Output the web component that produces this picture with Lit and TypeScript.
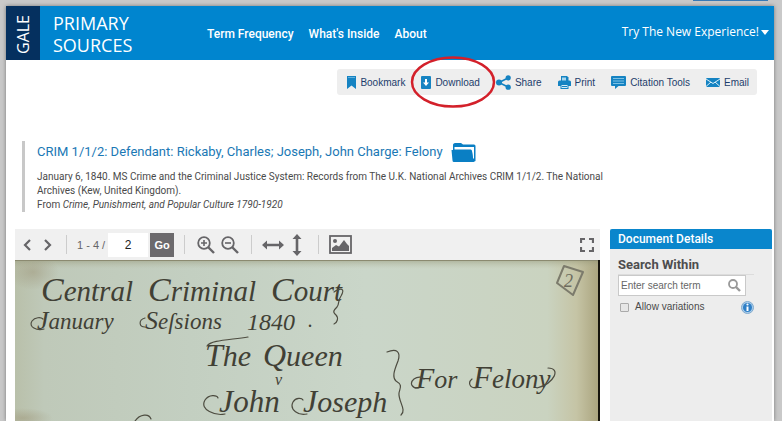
import { LitElement, html, css, svg } from "lit";
import { customElement, state } from "lit/decorators.js";

const icons = {
  bookmark: html`<svg width="9" height="13" viewBox="0 0 9 13" fill="currentColor" aria-hidden="true"><path d="M0 0h9v13L4.500 9.500 0 13z"/><path d="M1 1.500h7" stroke="#5fb0de" stroke-width="1"/></svg>`,
  download: html`<svg width="10" height="13" viewBox="0 0 10 13" aria-hidden="true"><rect width="10" height="13" rx="1" fill="currentColor"/><path d="M5 3v5" stroke="#fff" stroke-width="2"/><path d="M2 6.500h6L5 10z" fill="#fff"/></svg>`,
  share: html`<svg width="15" height="15" viewBox="0 0 15 15" fill="currentColor" aria-hidden="true"><path d="M12 3 3 7.500 12 12" fill="none" stroke="currentColor" stroke-width="1.600"/><circle cx="3" cy="7.500" r="3"/><circle cx="12.200" cy="2.800" r="2.600"/><circle cx="12.200" cy="12.200" r="2.600"/></svg>`,
  print: html`<svg width="13" height="13" viewBox="0 0 13 13" aria-hidden="true"><path d="M3 0h6l1.500 1.500V5H3z" fill="currentColor"/><path d="M4 1.500h4V5H4z" fill="#a8d6ee"/><path d="M1.500 4.500h10A1.500 1.500 0 0 1 13 6v4H0V6a1.500 1.500 0 0 1 1.500-1.500z" fill="currentColor"/><path d="M2.500 8h8v5h-8z" fill="currentColor"/><path d="M3.500 9h6v3h-6z" fill="#d5ebf6"/><path d="M4 10.500h5" stroke="currentColor"/></svg>`,
  cite: html`<svg width="15" height="13" viewBox="0 0 15 13" aria-hidden="true"><path d="M1 0h13a1 1 0 0 1 1 1v8a1 1 0 0 1-1 1H7.500L4 13v-3H1a1 1 0 0 1-1-1V1a1 1 0 0 1 1-1z" fill="currentColor"/><path d="M2 2.500h11M2 5h11M2 7.500h11" stroke="#7cc0e4" stroke-width="1"/></svg>`,
  email: html`<svg width="14" height="9" viewBox="0 0 14 9" aria-hidden="true"><rect width="14" height="9" rx="1" fill="currentColor"/><path d="M0 1l7 4.500L14 1M0 8.500 5 4M14 8.500 9 4" fill="none" stroke="#d9eef8" stroke-width="1"/></svg>`,
  folder: html`<svg width="25" height="21" viewBox="0 0 25 21" aria-hidden="true"><path d="M2 2.500Q2.500 1 4 1h6l2 1.500h11a1.500 1.500 0 0 1 1.500 1.500v15L22.500 20H3L1 9l1-1z" fill="#0a7fc4"/><path d="M3.500 5h19.500v11.500h-1L21 9 20 7.500H3.500z" fill="#fff"/><path d="M.500 8H19.500a1.500 1.500 0 0 1 1.500 1.500L22.500 20H3a1.500 1.500 0 0 1-1.500-1.500z" fill="#0a7fc4"/></svg>`,
  prev: html`<svg width="8" height="12" viewBox="0 0 8 12" fill="none" stroke="currentColor" stroke-width="2.200" aria-hidden="true"><path d="M7 1 2 6l5 5"/></svg>`,
  next: html`<svg width="8" height="12" viewBox="0 0 8 12" fill="none" stroke="currentColor" stroke-width="2.200" aria-hidden="true"><path d="m1 1 5 5-5 5"/></svg>`,
  zoomIn: html`<svg width="18" height="18" viewBox="0 0 18 18" fill="none" stroke="currentColor" aria-hidden="true"><circle cx="7" cy="7" r="5.800" stroke-width="1.800"/><path d="m11 11 6 6" stroke-width="2.400"/><path d="M4 7h6M7 4v6" stroke-width="1.600"/></svg>`,
  zoomOut: html`<svg width="18" height="18" viewBox="0 0 18 18" fill="none" stroke="currentColor" aria-hidden="true"><circle cx="7" cy="7" r="5.800" stroke-width="1.800"/><path d="m11 11 6 6" stroke-width="2.400"/><path d="M4 7h6" stroke-width="1.600"/></svg>`,
  fitWidth: html`<svg width="22" height="10" viewBox="0 0 22 10" fill="currentColor" aria-hidden="true"><path d="M0 5l5-4.500v3.200h12V.500L22 5l-5 4.500V6.300H5v3.200z"/></svg>`,
  fitHeight: html`<svg width="10" height="22" viewBox="0 0 10 22" fill="currentColor" aria-hidden="true"><path d="M5 0l4.500 5H6.300v12h3.200L5 22 .500 17h3.200V5H.500z"/></svg>`,
  picture: html`<svg width="23" height="19" viewBox="0 0 23 19" aria-hidden="true"><rect x="1" y="1" width="21" height="17" fill="none" stroke="currentColor" stroke-width="1.800"/><circle cx="6" cy="6" r="2" fill="currentColor"/><path d="M3 16v-3l4-3 3 1.500L15 5l3 4 2 2v5z" fill="currentColor"/></svg>`,
  full: html`<svg width="14" height="14" viewBox="0 0 14 14" fill="none" stroke="currentColor" stroke-width="2.200" aria-hidden="true"><path d="M1 5V1h4M9 1h4v4M13 9v4H9M5 13H1V9"/></svg>`,
  search: html`<svg width="13" height="13" viewBox="0 0 13 13" fill="none" stroke="currentColor" aria-hidden="true"><circle cx="5" cy="5" r="4" stroke-width="1.800"/><path d="m8 8 4 4" stroke-width="2.400"/></svg>`,
  info: html`<svg width="13" height="13" viewBox="0 0 13 13" aria-hidden="true"><circle cx="6.500" cy="6.500" r="6" fill="#a9cdec" stroke="#7fa9cc"/><circle cx="6.500" cy="6.500" r="4.500" fill="#2f7fc6"/><path d="M6.500 5.500v4.500" stroke="#fff" stroke-width="2"/><circle cx="6.500" cy="3.500" r="1.100" fill="#fff"/></svg>`,
};

// Each word has a capital larger than the letters that follow it.
const words: { cap: string; rest: string; x: number; y: number; capSize: number; size: number }[] = [
  { cap: "C", rest: "entral", x: 26, y: 41, capSize: 34, size: 29 },
  { cap: "C", rest: "riminal", x: 133, y: 41, capSize: 34, size: 29 },
  { cap: "C", rest: "ourt", x: 256, y: 41, capSize: 34, size: 29 },
  { cap: "J", rest: "anuary", x: 22, y: 69, capSize: 26, size: 23 },
  { cap: "S", rest: "eſsions", x: 130, y: 69, capSize: 26, size: 23 },
  { cap: "1", rest: "840", x: 232, y: 70, capSize: 24, size: 24 },
  { cap: ".", rest: "", x: 293, y: 67, capSize: 20, size: 20 },
  { cap: "T", rest: "he", x: 190, y: 106, capSize: 32, size: 30 },
  { cap: "Q", rest: "ueen", x: 248, y: 106, capSize: 32, size: 30 },
  { cap: "v", rest: "", x: 260, y: 125, capSize: 16, size: 16 },
  { cap: "J", rest: "ohn", x: 204, y: 152, capSize: 32, size: 31 },
  { cap: "J", rest: "oseph", x: 288, y: 152, capSize: 32, size: 30 },
  { cap: "F", rest: "or", x: 401, y: 128, capSize: 30, size: 26 },
  { cap: "F", rest: "elony", x: 458, y: 128, capSize: 31, size: 27 },
];

@customElement("manuscript-page")
export class ManuscriptPage extends LitElement {
  static styles = css`
    :host { display: block; }
    .sheet { display: block; width: 100%; height: auto; }
    .word { font-family: "Liberation Serif", serif; font-style: italic; fill: #414035; }
    .ink { fill: none; stroke: #4d4c40; stroke-width: 1.200; stroke-linecap: round; }
    .pencil { fill: none; stroke: #7c7b6c; stroke-width: 2; stroke-linejoin: round; }
    .folio { font-family: "Liberation Serif", serif; font-style: italic; fill: #6d6c5f; }
  `;

  render() {
    return html`<svg class="sheet" viewBox="0 0 585 161" role="img" aria-label="Manuscript page">
      <defs>
        <linearGradient id="paper" x1="0" x2="1" y1="0" y2="0">
          <stop offset="0" stop-color="#b9c0aa"/><stop offset=".05" stop-color="#bfc9b9"/>
          <stop offset=".3" stop-color="#c3cfc1"/><stop offset=".6" stop-color="#cad6c9"/>
          <stop offset=".91" stop-color="#cad3c0"/><stop offset=".96" stop-color="#c5c4a5"/>
          <stop offset="1" stop-color="#a9a27c"/>
        </linearGradient>
        <linearGradient id="top" x1="0" x2="0" y1="0" y2="1">
          <stop offset="0" stop-color="#8f9070" stop-opacity=".5"/><stop offset="1" stop-color="#b5b89d" stop-opacity="0"/>
        </linearGradient>
        <radialGradient id="stain"><stop offset="0" stop-color="#9d9578" stop-opacity=".5"/><stop offset="1" stop-color="#9d9578" stop-opacity="0"/></radialGradient>
      </defs>
      <rect width="585" height="161" fill="url(#paper)"/>
      <rect width="585" height="9" fill="url(#top)"/>
      <ellipse cx="18" cy="12" rx="26" ry="18" fill="url(#stain)"/>
      <ellipse cx="8" cy="158" rx="30" ry="10" fill="url(#stain)"/>
      <path d="M0 .500h585" stroke="#8b8a70"/>
      <rect x="583" width="2" height="161" fill="#16140d"/>
      ${words.map((w) => svg`<text class="word" x=${w.x} y=${w.y} font-size=${w.size}><tspan font-size=${w.capSize}>${w.cap}</tspan>${w.rest}</text>`)}
      <path class="ink" d="M319 32c8-5 11-3 7 4-4 6-1 7-4 11-3 3-5 5-1 8 3 3 1 8-2 9"/>
      <path class="ink" d="M29 69c-7 2-16-2-12-8 3-4 9-4 11-2M130 67c-6 0-7-7 0-9"/>
      <path class="ink" d="M192 86c4-6 22-6 41-9"/>
      <path class="ink" d="M210 154c-9 2-26-4-20-14 4-6 12-5 13-2M292 154c-8 2-18-4-14-12 3-5 9-4 10-2"/>
      <path class="ink" d="M372 92c10-4 14 0 11 9-4 10-6 16-2 20 7 4 4 7 3 12-1 8 8 17 2 22"/>
      <path class="ink" d="M404 128c-7 1-10-5-5-9 4-3 9-2 10 0M461 128c-7 0-8-6-4-9M522 128c18-5 24-20 11-20M120 161c5-7 14-8 16-2"/>
      <path class="pencil" d="m549 6 19 6-10 23-16-12z"/>
      <text class="folio" x="549" y="27" font-size="18">2</text>
    </svg>`;
  }
}

@customElement("app-root")
export class AppRoot extends LitElement {
  @state() private pageNo = "2";

  static styles = css`
    :host { display: block; background: #fff; font-family: "Liberation Sans", Arial, sans-serif; color: #4a4a4a; }
    * { box-sizing: border-box; }
    button { border: 0; padding: 0; background: none; font: inherit; color: inherit; display: flex; align-items: center; cursor: pointer; }
    svg { display: block; flex: none; }
    a { color: inherit; text-decoration: none; }
    h1, h2, h3, p { margin: 0; font-weight: 400; }
    .backdrop { background: #c9c9c9; padding: 0 8px 0 6px; margin-right: 1px; overflow: hidden; }
    .top { height: 6px; padding-right: 6px; display: flex; justify-content: flex-end; }
    .tab { width: 75px; height: 1px; background: #3779b5; }
    .page { background: #fff; box-shadow: 0 0 4px #777; }
    .header { display: flex; align-items: stretch; background: #0085cf; color: #fff; height: 54px; }
    .gale { width: 34px; background: #05305f; display: flex; align-items: center; justify-content: center; padding-top: 2px; font: 16px/20px "Open Sans", sans-serif; }
    .gale span { writing-mode: vertical-rl; transform: rotate(180deg); }
    .brand { width: 167px; padding: 6px 0 0 13px; font: 18px/22px "Open Sans", sans-serif; }
    .nav { display: flex; gap: 15px; align-items: center; padding-top: 2px; font: 500 12px/16px Roboto, sans-serif; flex: 1; }
    .try { font: 12px/16px "Open Sans", sans-serif; gap: 2px; padding: 0 5px 2px 0; }
    .tools { display: flex; justify-content: flex-end; padding: 9px 17px 0 0; }
    .toolbar { display: flex; align-items: center; gap: 16px; height: 26px; padding: 0 8px 0 10px; background: #eee; border-radius: 3px; font-size: 10px; color: #1d3d6b; }
    .toolbar button { position: relative; gap: 4px; }
    .toolbar svg { color: #1583c2; }
    .toolbar .ring { position: absolute; left: 50%; top: 50%; margin: -26px 0 0 -41px; pointer-events: none; color: #d3202a; }
    .doc { margin: 49px 16px 0; padding: 0 0 0 12px; border-left: 3px solid #c8c8c8; min-height: 71px; font: 10px/14px Roboto, sans-serif; }
    .doc .row { display: flex; align-items: flex-start; gap: 8px; padding-bottom: 7px; margin-top: -3px; }
    .doc h1 { font-size: 13px; line-height: 22px; color: #1a78b5; }
    .doc .row button { padding-top: 1px; height: 21px; }
    .body { display: flex; align-items: stretch; gap: 10px; padding: 17px 2px 0 9px; }
    .viewer { flex: 1; min-width: 0; }
    .bar { display: flex; align-items: center; height: 31px; background: #f0f0f0; color: #666568; padding: 0 6px 0 8px; font-size: 11px; }
    .sep { width: 1px; height: 19px; background: #ccc; }
    .pair { display: flex; align-items: center; gap: 13px; }
    .steps { padding-right: 14px; }
    .zoom { gap: 6px; padding: 0 12px; }
    .fit { gap: 8px; padding: 0 16px 0 10px; }
    .pic { padding-left: 10px; flex: 1; }
    .pages { display: flex; align-items: center; gap: 2px; padding: 0 10px; }
    .pages label { padding-right: 1px; }
    .num { width: 40px; height: 24px; border: 0; background: #fff; text-align: center; font: 12px "Liberation Sans", sans-serif; color: #222; padding: 0; }
    .go { width: 24px; height: 24px; justify-content: center; background: #6c6a6d; color: #fff; font: bold 11px "Liberation Sans", sans-serif; }
    .side { width: 162px; background: #ededed; }
    .side h2 { font: 500 12px/20px Roboto, sans-serif; background: #0a86cc; color: #fff; padding-left: 8px; border-radius: 2px 2px 0 0; }
    .panel { padding: 7px 18px 0 8px; }
    .side h3 { font: bold 13px/18px Roboto, sans-serif; color: #4d4d4f; border-bottom: 1px solid #dcdcdc; }
    .find { display: flex; align-items: center; width: 128px; height: 21px; background: #fff; border: 1px solid #c9c9c9; padding-right: 4px; color: #999; }
    .find input { flex: 1; min-width: 0; border: 0; background: none; padding: 0 0 0 2px; font: 10px "Liberation Sans", sans-serif; outline: 0; }
    .find input::placeholder { color: #666; }
    .vary { display: flex; align-items: center; padding: 4px 0 0 2px; font: 10px/14px "Liberation Sans", sans-serif; justify-content: space-between; }
    .vary label { display: flex; align-items: center; gap: 6px; }
    .vary input { appearance: none; margin: 0; width: 9px; height: 9px; border: 1px solid #aaa; background: #e6e6e6; border-radius: 1px; }
  `;

  private onPage(e: Event) {
    this.pageNo = (e.target as HTMLInputElement).value;
  }

  render() {
    return html`<div class="backdrop">
      <div class="top"><div class="tab"></div></div>
      <div class="page">
        <header class="header">
          <div class="gale"><span>GALE</span></div>
          <div class="brand">PRIMARY<br />SOURCES</div>
          <nav class="nav"><a href="#">Term Frequency</a><a href="#">What's Inside</a><a href="#">About</a></nav>
          <button class="try">Try The New Experience!<svg width="8" height="5" viewBox="0 0 8 5" fill="#fff" aria-hidden="true"><path d="M0 0h8L4 5z"/></svg></button>
        </header>
        <div class="tools"><div class="toolbar">
          <button>${icons.bookmark}Bookmark</button>
          <button>${icons.download}Download<svg class="ring" width="86" height="52" viewBox="0 0 86 52" fill="none" stroke="currentColor" stroke-width="2.500" aria-hidden="true"><ellipse cx="43" cy="26" rx="41" ry="24.500"/></svg></button>
          <button>${icons.share}Share</button>
          <button>${icons.print}Print</button>
          <button>${icons.cite}Citation Tools</button>
          <button>${icons.email}Email</button>
        </div></div>
        <section class="doc">
          <div class="row"><h1>CRIM 1/1/2: Defendant: Rickaby, Charles; Joseph, John Charge: Felony</h1><button aria-label="Folder">${icons.folder}</button></div>
          <p>January 6, 1840. MS Crime and the Criminal Justice System: Records from The U.K. National Archives CRIM 1/1/2. The National<br />Archives (Kew, United Kingdom).</p>
          <p>From <em>Crime, Punishment, and Popular Culture 1790-1920</em></p>
        </section>
        <div class="body">
          <main class="viewer">
            <div class="bar">
              <div class="pair steps"><button aria-label="Previous">${icons.prev}</button><button aria-label="Next">${icons.next}</button></div>
              <span class="sep"></span>
              <div class="pages"><label for="num">1 - 4 /</label><input id="num" class="num" .value=${this.pageNo} @input=${this.onPage} /><button class="go">Go</button></div>
              <span class="sep"></span>
              <div class="pair zoom"><button aria-label="Zoom in">${icons.zoomIn}</button><button aria-label="Zoom out">${icons.zoomOut}</button></div>
              <span class="sep"></span>
              <div class="pair fit"><button aria-label="Fit width">${icons.fitWidth}</button><button aria-label="Fit height">${icons.fitHeight}</button></div>
              <span class="sep"></span>
              <div class="pic"><button aria-label="Image settings">${icons.picture}</button></div>
              <button aria-label="Full screen">${icons.full}</button>
            </div>
            <manuscript-page></manuscript-page>
          </main>
          <aside class="side">
            <h2>Document Details</h2>
            <div class="panel">
              <h3>Search Within</h3>
              <div class="find"><input type="text" aria-label="Search within" placeholder="Enter search term" /><button aria-label="Search">${icons.search}</button></div>
              <div class="vary"><label><input type="checkbox" />Allow variations</label><button aria-label="Help">${icons.info}</button></div>
            </div>
          </aside>
        </div>
      </div>
    </div>`;
  }
}
